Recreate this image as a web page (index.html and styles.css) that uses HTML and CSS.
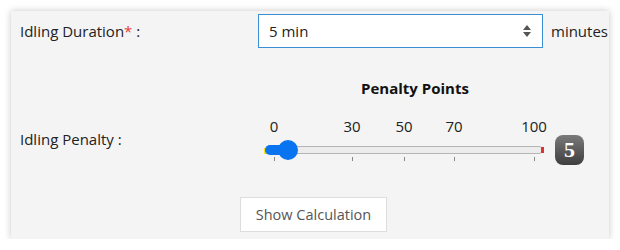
FILE: index.html
```html
<!DOCTYPE html>
<html>
<head>
<meta charset="utf-8">
<link rel="stylesheet" href="styles.css">
</head>
<body>
<div class="panel">
  <div class="row row-duration">
    <div class="label">Idling Duration<span class="req">*</span> :</div>
    <div class="select">
      <span class="select-value">5 min</span>
      <svg class="select-arrows" width="10" height="14" viewBox="0 0 10 14"><path d="M5 1 L9 6 L1 6 Z M5 13 L9 8 L1 8 Z" fill="#555"/></svg>
    </div>
    <div class="unit">minutes</div>
  </div>
  <div class="row row-penalty">
    <div class="label">Idling Penalty :</div>
    <div class="penalty-block">
      <div class="penalty-title">Penalty Points</div>
      <div class="slider-line">
        <div class="slider">
          <div class="scale">
            <span class="scale-label" style="left:9px">0</span>
            <span class="scale-label" style="left:87px">30</span>
            <span class="scale-label" style="left:139px">50</span>
            <span class="scale-label" style="left:189px">70</span>
            <span class="scale-label" style="left:269px">100</span>
          </div>
          <div class="track">
            <div class="track-min"></div>
            <div class="track-max"></div>
            <div class="fill"></div>
            <div class="handle"></div>
          </div>
          <div class="ticks">
            <span class="tick" style="left:9px"></span>
            <span class="tick" style="left:87px"></span>
            <span class="tick" style="left:139px"></span>
            <span class="tick" style="left:189px"></span>
            <span class="tick" style="left:269px"></span>
          </div>
        </div>
        <div class="badge">5</div>
      </div>
    </div>
  </div>
  <div class="actions">
    <button class="btn">Show Calculation</button>
  </div>
</div>
</body>
</html>
```
FILE: styles.css
```css
html, body {
  margin: 0;
  padding: 0;
  background: #ffffff;
}
body {
  font-family: "Open Sans", "Liberation Sans", sans-serif;
  font-size: 15px;
  color: #222;
}
.panel {
  margin: 11px 0 0 11px;
  width: 598px;
  height: 228px;
  box-sizing: border-box;
  background: #f4f4f4;
  box-shadow: 0 0 7px rgba(0, 0, 0, 0.22);
  padding: 3px 0 0 9px;
}
.row {
  display: flex;
  align-items: center;
}
.label {
  width: 238px;
  flex: none;
  color: #222;
}
.req {
  color: #e43b3b;
}
.select {
  width: 285px;
  height: 34px;
  box-sizing: border-box;
  border: 1px solid #3b8fd6;
  background: #fff;
  display: flex;
  align-items: center;
  justify-content: space-between;
  padding: 0 10px 0 10px;
}
.select-value {
  color: #222;
}
.select-arrows {
  display: block;
}
.unit {
  margin-left: 8px;
  color: #222;
}
.row-penalty {
  margin-top: 30px;
  align-items: flex-start;
}
.row-penalty .label {
  margin-top: 51px;
}
.penalty-block {
  display: flex;
  flex-direction: column;
  width: 340px;
}
.penalty-title {
  font-weight: bold;
  text-align: center;
  width: 314px;
  color: #111;
  height: 20px;
  line-height: 20px;
}
.slider-line {
  display: flex;
  align-items: flex-end;
  margin-top: 18px;
}
.slider {
  width: 278px;
  margin-left: 7px;
  flex: none;
}
.scale {
  position: relative;
  height: 20px;
}
.scale-label {
  position: absolute;
  top: 0;
  transform: translateX(-50%);
  color: #222;
  line-height: 20px;
}
.track {
  position: relative;
  height: 8px;
  margin-top: 10px;
  box-sizing: border-box;
  border: 1px solid #b5b5b5;
  border-radius: 4px;
  background: #ececec;
}
.track-min {
  position: absolute;
  left: -2px;
  top: 1px;
  width: 4px;
  height: 6px;
  background: #f3e214;
}
.track-max {
  position: absolute;
  right: -2px;
  top: 0px;
  width: 3px;
  height: 6px;
  background: #e53030;
}
.fill {
  position: absolute;
  left: -1px;
  top: -2px;
  width: 24px;
  height: 10px;
  border-radius: 5px 0 0 5px;
  background: #0a74f0;
}
.handle {
  position: absolute;
  left: 12px;
  top: -7px;
  width: 20px;
  height: 20px;
  border-radius: 50%;
  background: #0a74f0;
}
.ticks {
  position: relative;
  height: 8px;
  margin-top: 3px;
}
.tick {
  position: absolute;
  top: 0;
  width: 1px;
  height: 4px;
  background: #888;
}
.badge {
  margin-left: 12px;
  margin-bottom: 0;
  width: 29px;
  height: 30px;
  border-radius: 8px;
  background: linear-gradient(#7a7a7a, #3e3e3e);
  color: #fff;
  font-family: "Liberation Serif", "DejaVu Serif", serif;
  font-weight: bold;
  font-size: 22px;
  display: flex;
  align-items: center;
  justify-content: center;
}
.actions {
  margin-top: 32px;
  padding-left: 220px;
}
.btn {
  font-family: "Open Sans", "Liberation Sans", sans-serif;
  font-size: 14.5px;
  color: #555;
  background: #fff;
  border: 1px solid #ddd;
  height: 35px;
  width: 147px;
  padding: 0;
}
```
